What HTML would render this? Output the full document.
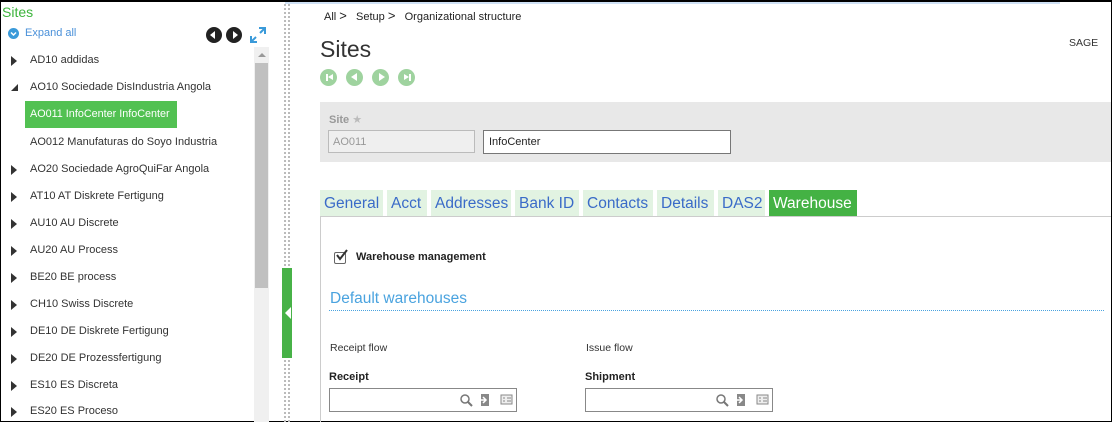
<!DOCTYPE html>
<html><head><meta charset="utf-8"><style>
*{margin:0;padding:0;box-sizing:border-box}
body{width:1114px;height:425px;overflow:hidden;background:#fff;font-family:"Liberation Sans",sans-serif;position:relative;color:#333}
.a{position:absolute;white-space:nowrap}
.row{position:absolute;left:30px;font-size:11px;color:#333}
.tri{position:absolute;left:11px;width:0;height:0;border-top:5px solid transparent;border-bottom:5px solid transparent;border-left:6px solid #333}
.tab{position:absolute;top:190px;height:26px;background:#e2f3e2;color:#3a6bc8;font-size:15.5px;line-height:27px;padding-left:4px}
.nav{position:absolute;top:69px;width:17px;height:17px;border-radius:50%;background:#9fd39f}
.inp{position:absolute;border:1px solid #888;background:#fff}
</style></head><body>
<div class="a" style="left:0;top:0;width:1112px;height:422px;border:1px solid #000;border-top:2px solid #000"></div>
<div class="a" style="left:285px;top:2px;width:775px;height:2px;background:#cfe1f5"></div>
<!-- left panel -->
<div class="a" style="left:2px;top:4px;font-size:14px;color:#3cb43c">Sites</div>
<div class="a" style="left:8px;top:28px;width:11px;height:11px;border-radius:50%;background:#3a9ad9"></div>
<svg class="a" style="left:8px;top:28px" width="11" height="11"><path d="M3 4.5l2.5 2.5 2.5-2.5" stroke="#fff" stroke-width="1.5" fill="none"/></svg>
<div class="a" style="left:25px;top:27px;font-size:11px;color:#4a90d9">Expand all</div>
<div class="a" style="left:206px;top:27px;width:16px;height:16px;border-radius:50%;background:#222"></div>
<div class="a" style="left:210px;top:31px;border-top:4px solid transparent;border-bottom:4px solid transparent;border-right:5px solid #fff"></div>
<div class="a" style="left:226px;top:27px;width:16px;height:16px;border-radius:50%;background:#222"></div>
<div class="a" style="left:233px;top:31px;border-top:4px solid transparent;border-bottom:4px solid transparent;border-left:5px solid #fff"></div>
<svg class="a" style="left:250px;top:27px" width="16" height="16"><path d="M9 1h6v6M15 1l-5 5M7 15H1V9M1 15l5-5" stroke="#3a9ad9" stroke-width="2" fill="none"/></svg>
<div class="a" style="left:254px;top:47px;width:15px;height:375px;background:#f0f0f0"></div>
<div class="a" style="left:258px;top:53px;border-left:4px solid transparent;border-right:4px solid transparent;border-bottom:4px solid #999"></div>
<div class="a" style="left:255px;top:63px;width:13px;height:225px;background:#c0c0c0"></div>
<div class="a" style="left:284px;top:4px;width:6px;height:418px;border-left:2px dotted #bbb;border-right:2px dotted #bbb"></div>
<div class="a" style="left:282px;top:268px;width:10px;height:90px;background:#47b247"></div>
<div class="a" style="left:285px;top:307px;border-top:6px solid transparent;border-bottom:6px solid transparent;border-right:6px solid #fff"></div>

<div class="tri" style="top:56px"></div><div class="row" style="top:54px">AD10 addidas</div>
<div class="a" style="left:11px;top:84px;border-left:7px solid transparent;border-bottom:7px solid #333"></div><div class="row" style="top:81px">AO10 Sociedade DisIndustria Angola</div>
<div class="a" style="left:25px;top:101px;width:152px;height:27px;background:#52c152"></div>
<div class="row" style="top:108px;color:#fff;font-size:10.8px">AO011 InfoCenter InfoCenter</div>
<div class="row" style="top:136px">AO012 Manufaturas do Soyo Industria</div>
<div class="tri" style="top:165px"></div><div class="row" style="top:163px">AO20 Sociedade AgroQuiFar Angola</div>
<div class="tri" style="top:192px"></div><div class="row" style="top:190px">AT10 AT Diskrete Fertigung</div>
<div class="tri" style="top:219px"></div><div class="row" style="top:217px">AU10 AU Discrete</div>
<div class="tri" style="top:246px"></div><div class="row" style="top:244px">AU20 AU Process</div>
<div class="tri" style="top:273px"></div><div class="row" style="top:271px">BE20 BE process</div>
<div class="tri" style="top:300px"></div><div class="row" style="top:298px">CH10 Swiss Discrete</div>
<div class="tri" style="top:327px"></div><div class="row" style="top:325px">DE10 DE Diskrete Fertigung</div>
<div class="tri" style="top:354px"></div><div class="row" style="top:352px">DE20 DE Prozessfertigung</div>
<div class="tri" style="top:381px"></div><div class="row" style="top:379px">ES10 ES Discreta</div>
<div class="tri" style="top:407px"></div><div class="row" style="top:405px">ES20 ES Proceso</div>

<!-- right -->
<div class="a" style="left:324px;top:8px;font-size:11px;color:#222">All <span style="font-size:13px">&gt;</span>&nbsp;&nbsp; Setup <span style="font-size:13px">&gt;</span>&nbsp;&nbsp; Organizational structure</div>
<div class="a" style="left:320px;top:36px;font-size:23px;color:#333">Sites</div>
<div class="a" style="left:1069px;top:37px;font-size:10.5px;color:#333">SAGE</div>
<div class="nav" style="left:320px"></div><div class="nav" style="left:346px"></div><div class="nav" style="left:372px"></div><div class="nav" style="left:398px"></div>
<div class="a" style="left:326px;top:74px;width:2px;height:7px;background:#fff"></div><div class="a" style="left:328px;top:74px;border-top:3.5px solid transparent;border-bottom:3.5px solid transparent;border-right:5px solid #fff"></div>
<div class="a" style="left:351px;top:73px;border-top:4.5px solid transparent;border-bottom:4.5px solid transparent;border-right:6px solid #fff"></div>
<div class="a" style="left:379px;top:73px;border-top:4.5px solid transparent;border-bottom:4.5px solid transparent;border-left:6px solid #fff"></div>
<div class="a" style="left:404px;top:74px;border-top:3.5px solid transparent;border-bottom:3.5px solid transparent;border-left:5px solid #fff"></div><div class="a" style="left:409px;top:74px;width:2px;height:7px;background:#fff"></div>

<div class="a" style="left:320px;top:102px;width:791px;height:60px;background:#e8e8e8"></div>
<div class="a" style="left:329px;top:113px;font-size:11px;font-weight:bold;color:#999">Site <span style="color:#bbb;font-weight:normal">★</span></div>
<div class="inp" style="left:328px;top:130px;width:147px;height:23px;background:#efefef;border-color:#bbb;font-size:11px;color:#999;padding:5px 4px">AO011</div>
<div class="inp" style="left:483px;top:130px;width:248px;height:24px;border-color:#777;font-size:11px;color:#222;padding:5px 5px">InfoCenter</div>

<div class="tab" style="left:320px;width:63px">General</div>
<div class="tab" style="left:387px;width:40px">Acct</div>
<div class="tab" style="left:431px;width:80px">Addresses</div>
<div class="tab" style="left:515px;width:64px">Bank ID</div>
<div class="tab" style="left:583px;width:70px">Contacts</div>
<div class="tab" style="left:657px;width:57px">Details</div>
<div class="tab" style="left:718px;width:47px">DAS2</div>
<div class="tab" style="left:769px;width:88px;background:#44b244;color:#fff">Warehouse</div>
<div class="a" style="left:320px;top:216px;width:791px;height:1px;background:#ccc"></div>
<div class="a" style="left:320px;top:216px;width:1px;height:206px;background:#ccc"></div>

<div class="a" style="left:334px;top:252px;width:12px;height:12px;border:1px solid #666;border-radius:2px"></div>
<svg class="a" style="left:335px;top:248px" width="14" height="14"><path d="M2 7l3 4 7-9" stroke="#333" stroke-width="2" fill="none"/></svg>
<div class="a" style="left:356px;top:251px;font-size:11px;font-weight:bold;color:#222">Warehouse management</div>
<div class="a" style="left:330px;top:290px;font-size:15.5px;color:#4aa3df">Default warehouses</div>
<div class="a" style="left:329px;top:310px;width:775px;border-top:1px dotted #4aa3df"></div>
<div class="a" style="left:330px;top:342px;font-size:10.5px;color:#333">Receipt flow</div>
<div class="a" style="left:586px;top:342px;font-size:10.5px;color:#333">Issue flow</div>
<div class="a" style="left:329px;top:371px;font-size:11px;font-weight:bold;color:#222">Receipt</div>
<div class="a" style="left:585px;top:371px;font-size:11px;font-weight:bold;color:#222">Shipment</div>
<div class="inp" style="left:329px;top:388px;width:188px;height:24px"></div>
<div class="inp" style="left:585px;top:388px;width:188px;height:24px"></div>
<svg class="a" style="left:460px;top:393px" width="55" height="14"><circle cx="5" cy="6" r="4" stroke="#777" stroke-width="1.5" fill="none"/><path d="M8 9l4 4" stroke="#777" stroke-width="2"/><rect x="21" y="1" width="8" height="12" fill="#888"/><path d="M19 7h6M23 4l3 3-3 3" stroke="#fff" stroke-width="1.5" fill="none"/><rect x="41" y="2" width="11" height="9" stroke="#888" fill="#eee"/><path d="M43 5h2M47 5h4M43 8h2M47 8h4" stroke="#888"/></svg>
<svg class="a" style="left:716px;top:393px" width="55" height="14"><circle cx="5" cy="6" r="4" stroke="#777" stroke-width="1.5" fill="none"/><path d="M8 9l4 4" stroke="#777" stroke-width="2"/><rect x="21" y="1" width="8" height="12" fill="#888"/><path d="M19 7h6M23 4l3 3-3 3" stroke="#fff" stroke-width="1.5" fill="none"/><rect x="41" y="2" width="11" height="9" stroke="#888" fill="#eee"/><path d="M43 5h2M47 5h4M43 8h2M47 8h4" stroke="#888"/></svg>
</body></html>
